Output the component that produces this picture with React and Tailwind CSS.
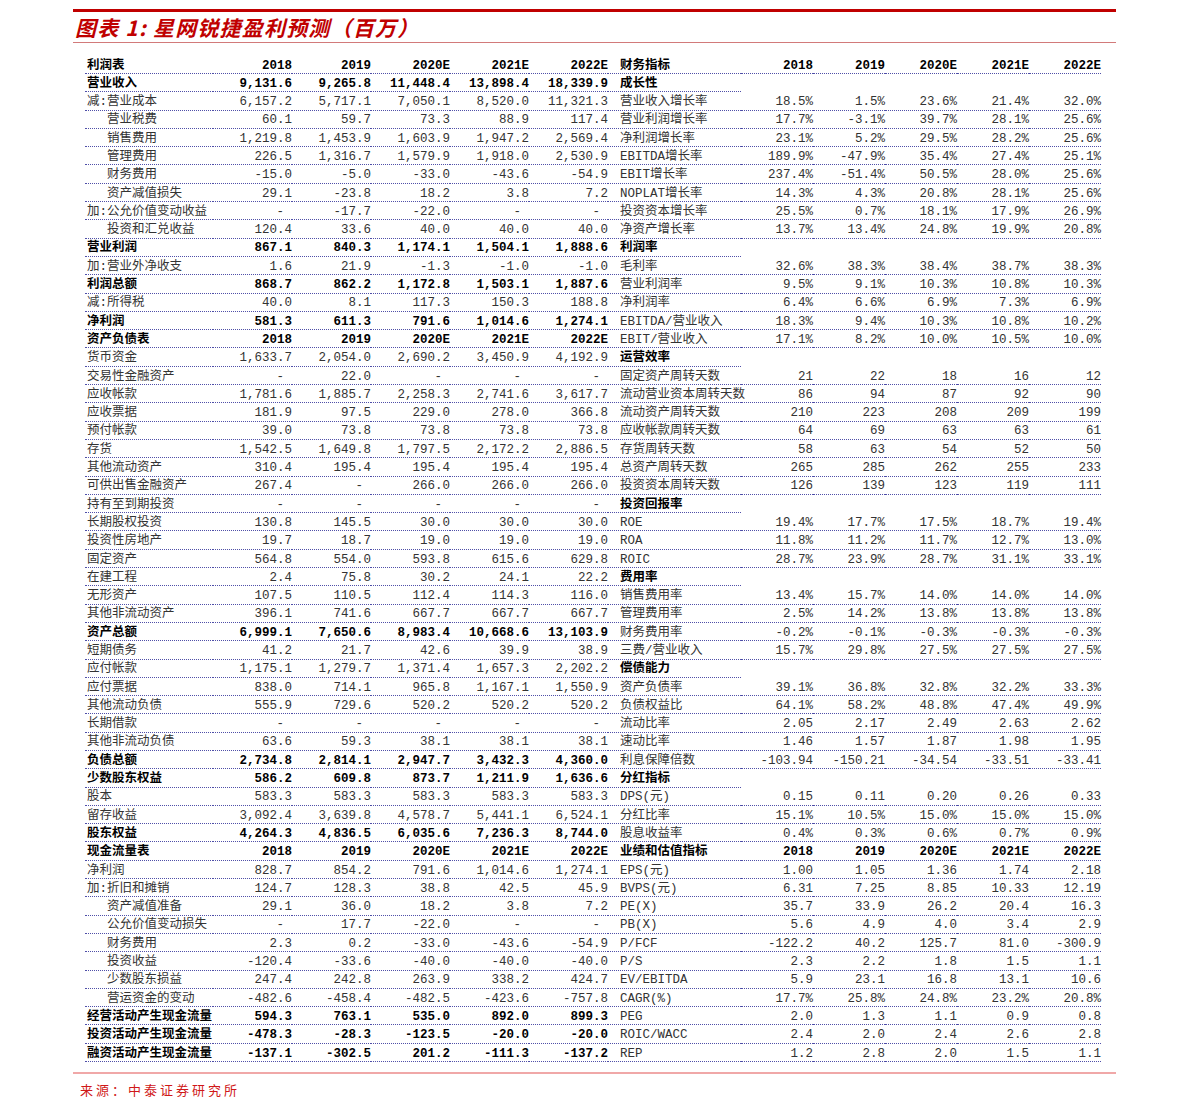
const left = [
  ['利润表', ['2018', '2019', '2020E', '2021E', '2022E'], 'h'],
  ['营业收入', ['9,131.6', '9,265.8', '11,448.4', '13,898.4', '18,339.9'], 'b'],
  ['减:营业成本', ['6,157.2', '5,717.1', '7,050.1', '8,520.0', '11,321.3'], ''],
  ['营业税费', ['60.1', '59.7', '73.3', '88.9', '117.4'], 'i'],
  ['销售费用', ['1,219.8', '1,453.9', '1,603.9', '1,947.2', '2,569.4'], 'i'],
  ['管理费用', ['226.5', '1,316.7', '1,579.9', '1,918.0', '2,530.9'], 'i'],
  ['财务费用', ['-15.0', '-5.0', '-33.0', '-43.6', '-54.9'], 'i'],
  ['资产减值损失', ['29.1', '-23.8', '18.2', '3.8', '7.2'], 'i'],
  ['加:公允价值变动收益', ['-', '-17.7', '-22.0', '-', '-'], ''],
  ['投资和汇兑收益', ['120.4', '33.6', '40.0', '40.0', '40.0'], 'i'],
  ['营业利润', ['867.1', '840.3', '1,174.1', '1,504.1', '1,888.6'], 'b'],
  ['加:营业外净收支', ['1.6', '21.9', '-1.3', '-1.0', '-1.0'], ''],
  ['利润总额', ['868.7', '862.2', '1,172.8', '1,503.1', '1,887.6'], 'b'],
  ['减:所得税', ['40.0', '8.1', '117.3', '150.3', '188.8'], ''],
  ['净利润', ['581.3', '611.3', '791.6', '1,014.6', '1,274.1'], 'b'],
  ['资产负债表', ['2018', '2019', '2020E', '2021E', '2022E'], 'h'],
  ['货币资金', ['1,633.7', '2,054.0', '2,690.2', '3,450.9', '4,192.9'], ''],
  ['交易性金融资产', ['-', '22.0', '-', '-', '-'], ''],
  ['应收帐款', ['1,781.6', '1,885.7', '2,258.3', '2,741.6', '3,617.7'], ''],
  ['应收票据', ['181.9', '97.5', '229.0', '278.0', '366.8'], ''],
  ['预付帐款', ['39.0', '73.8', '73.8', '73.8', '73.8'], ''],
  ['存货', ['1,542.5', '1,649.8', '1,797.5', '2,172.2', '2,886.5'], ''],
  ['其他流动资产', ['310.4', '195.4', '195.4', '195.4', '195.4'], ''],
  ['可供出售金融资产', ['267.4', '-', '266.0', '266.0', '266.0'], ''],
  ['持有至到期投资', ['-', '-', '-', '-', '-'], ''],
  ['长期股权投资', ['130.8', '145.5', '30.0', '30.0', '30.0'], ''],
  ['投资性房地产', ['19.7', '18.7', '19.0', '19.0', '19.0'], ''],
  ['固定资产', ['564.8', '554.0', '593.8', '615.6', '629.8'], ''],
  ['在建工程', ['2.4', '75.8', '30.2', '24.1', '22.2'], ''],
  ['无形资产', ['107.5', '110.5', '112.4', '114.3', '116.0'], ''],
  ['其他非流动资产', ['396.1', '741.6', '667.7', '667.7', '667.7'], ''],
  ['资产总额', ['6,999.1', '7,650.6', '8,983.4', '10,668.6', '13,103.9'], 'b'],
  ['短期债务', ['41.2', '21.7', '42.6', '39.9', '38.9'], ''],
  ['应付帐款', ['1,175.1', '1,279.7', '1,371.4', '1,657.3', '2,202.2'], ''],
  ['应付票据', ['838.0', '714.1', '965.8', '1,167.1', '1,550.9'], ''],
  ['其他流动负债', ['555.9', '729.6', '520.2', '520.2', '520.2'], ''],
  ['长期借款', ['-', '-', '-', '-', '-'], ''],
  ['其他非流动负债', ['63.6', '59.3', '38.1', '38.1', '38.1'], ''],
  ['负债总额', ['2,734.8', '2,814.1', '2,947.7', '3,432.3', '4,360.0'], 'b'],
  ['少数股东权益', ['586.2', '609.8', '873.7', '1,211.9', '1,636.6'], 'b'],
  ['股本', ['583.3', '583.3', '583.3', '583.3', '583.3'], ''],
  ['留存收益', ['3,092.4', '3,639.8', '4,578.7', '5,441.1', '6,524.1'], ''],
  ['股东权益', ['4,264.3', '4,836.5', '6,035.6', '7,236.3', '8,744.0'], 'b'],
  ['现金流量表', ['2018', '2019', '2020E', '2021E', '2022E'], 'h'],
  ['净利润', ['828.7', '854.2', '791.6', '1,014.6', '1,274.1'], ''],
  ['加:折旧和摊销', ['124.7', '128.3', '38.8', '42.5', '45.9'], ''],
  ['资产减值准备', ['29.1', '36.0', '18.2', '3.8', '7.2'], 'i'],
  ['公允价值变动损失', ['-', '17.7', '-22.0', '-', '-'], 'i'],
  ['财务费用', ['2.3', '0.2', '-33.0', '-43.6', '-54.9'], 'i'],
  ['投资收益', ['-120.4', '-33.6', '-40.0', '-40.0', '-40.0'], 'i'],
  ['少数股东损益', ['247.4', '242.8', '263.9', '338.2', '424.7'], 'i'],
  ['营运资金的变动', ['-482.6', '-458.4', '-482.5', '-423.6', '-757.8'], 'i'],
  ['经营活动产生现金流量', ['594.3', '763.1', '535.0', '892.0', '899.3'], 'b'],
  ['投资活动产生现金流量', ['-478.3', '-28.3', '-123.5', '-20.0', '-20.0'], 'b'],
  ['融资活动产生现金流量', ['-137.1', '-302.5', '201.2', '-111.3', '-137.2'], 'b'],
]

const right = [
  ['财务指标', ['2018', '2019', '2020E', '2021E', '2022E'], 'h'],
  ['成长性', null, 's'],
  ['营业收入增长率', ['18.5%', '1.5%', '23.6%', '21.4%', '32.0%']],
  ['营业利润增长率', ['17.7%', '-3.1%', '39.7%', '28.1%', '25.6%']],
  ['净利润增长率', ['23.1%', '5.2%', '29.5%', '28.2%', '25.6%']],
  ['EBITDA增长率', ['189.9%', '-47.9%', '35.4%', '27.4%', '25.1%']],
  ['EBIT增长率', ['237.4%', '-51.4%', '50.5%', '28.0%', '25.6%']],
  ['NOPLAT增长率', ['14.3%', '4.3%', '20.8%', '28.1%', '25.6%']],
  ['投资资本增长率', ['25.5%', '0.7%', '18.1%', '17.9%', '26.9%']],
  ['净资产增长率', ['13.7%', '13.4%', '24.8%', '19.9%', '20.8%']],
  ['利润率', null, 's'],
  ['毛利率', ['32.6%', '38.3%', '38.4%', '38.7%', '38.3%']],
  ['营业利润率', ['9.5%', '9.1%', '10.3%', '10.8%', '10.3%']],
  ['净利润率', ['6.4%', '6.6%', '6.9%', '7.3%', '6.9%']],
  ['EBITDA/营业收入', ['18.3%', '9.4%', '10.3%', '10.8%', '10.2%']],
  ['EBIT/营业收入', ['17.1%', '8.2%', '10.0%', '10.5%', '10.0%']],
  ['运营效率', null, 's'],
  ['固定资产周转天数', ['21', '22', '18', '16', '12']],
  ['流动营业资本周转天数', ['86', '94', '87', '92', '90']],
  ['流动资产周转天数', ['210', '223', '208', '209', '199']],
  ['应收帐款周转天数', ['64', '69', '63', '63', '61']],
  ['存货周转天数', ['58', '63', '54', '52', '50']],
  ['总资产周转天数', ['265', '285', '262', '255', '233']],
  ['投资资本周转天数', ['126', '139', '123', '119', '111']],
  ['投资回报率', null, 's'],
  ['ROE', ['19.4%', '17.7%', '17.5%', '18.7%', '19.4%']],
  ['ROA', ['11.8%', '11.2%', '11.7%', '12.7%', '13.0%']],
  ['ROIC', ['28.7%', '23.9%', '28.7%', '31.1%', '33.1%']],
  ['费用率', null, 's'],
  ['销售费用率', ['13.4%', '15.7%', '14.0%', '14.0%', '14.0%']],
  ['管理费用率', ['2.5%', '14.2%', '13.8%', '13.8%', '13.8%']],
  ['财务费用率', ['-0.2%', '-0.1%', '-0.3%', '-0.3%', '-0.3%']],
  ['三费/营业收入', ['15.7%', '29.8%', '27.5%', '27.5%', '27.5%']],
  ['偿债能力', null, 's'],
  ['资产负债率', ['39.1%', '36.8%', '32.8%', '32.2%', '33.3%']],
  ['负债权益比', ['64.1%', '58.2%', '48.8%', '47.4%', '49.9%']],
  ['流动比率', ['2.05', '2.17', '2.49', '2.63', '2.62']],
  ['速动比率', ['1.46', '1.57', '1.87', '1.98', '1.95']],
  ['利息保障倍数', ['-103.94', '-150.21', '-34.54', '-33.51', '-33.41']],
  ['分红指标', null, 's'],
  ['DPS(元)', ['0.15', '0.11', '0.20', '0.26', '0.33']],
  ['分红比率', ['15.1%', '10.5%', '15.0%', '15.0%', '15.0%']],
  ['股息收益率', ['0.4%', '0.3%', '0.6%', '0.7%', '0.9%']],
  ['业绩和估值指标', ['2018', '2019', '2020E', '2021E', '2022E'], 'h'],
  ['EPS(元)', ['1.00', '1.05', '1.36', '1.74', '2.18']],
  ['BVPS(元)', ['6.31', '7.25', '8.85', '10.33', '12.19']],
  ['PE(X)', ['35.7', '33.9', '26.2', '20.4', '16.3']],
  ['PB(X)', ['5.6', '4.9', '4.0', '3.4', '2.9']],
  ['P/FCF', ['-122.2', '40.2', '125.7', '81.0', '-300.9']],
  ['P/S', ['2.3', '2.2', '1.8', '1.5', '1.1']],
  ['EV/EBITDA', ['5.9', '23.1', '16.8', '13.1', '10.6']],
  ['CAGR(%)', ['17.7%', '25.8%', '24.8%', '23.2%', '20.8%']],
  ['PEG', ['2.0', '1.3', '1.1', '0.9', '0.8']],
  ['ROIC/WACC', ['2.4', '2.0', '2.4', '2.6', '2.8']],
  ['REP', ['1.2', '2.8', '2.0', '1.5', '1.1']],
]

// every cell carries the blue dotted rule of the original sheet
const line = 'border-b border-dotted border-[#4f4fa8] pt-[4.5px] leading-[13.5px]'

function Row({ l, r }) {
  const [lLabel, lVals, lType] = l
  const [rLabel, rVals, rType] = r
  const lStrong = lType === 'b' || lType === 'h'
  const rStrong = rType === 'h' || rType === 's'

  return (
    <div className="grid grid-cols-[128px_repeat(5,79px)_133px_repeat(5,72px)] h-[18.3px]">
      <div
        className={`${line} whitespace-nowrap ${lType === 'i' ? 'pl-[22px]' : 'pl-[2px]'} ${
          lStrong ? 'font-bold text-black' : 'text-[#333]'
        }`}
      >
        {lLabel}
      </div>
      {lVals.map((v, i) => (
        <div
          key={i}
          className={`${line} text-right whitespace-nowrap ${v === '-' ? 'pr-[8px]' : ''} ${
            lStrong ? 'font-bold text-black' : 'text-[#333]'
          }`}
        >
          {v}
        </div>
      ))}
      <div
        className={`${line} pl-[12px] whitespace-nowrap ${rStrong ? 'font-bold text-black' : 'text-[#333]'}`}
      >
        {rLabel}
      </div>
      {rVals
        ? rVals.map((v, i) => (
            <div
              key={i}
              className={`${line} text-right whitespace-nowrap ${
                rType === 'h' ? 'font-bold text-black' : 'text-[#333]'
              }`}
            >
              {v}
            </div>
          ))
        : [0, 1, 2, 3, 4].map(i => <div key={i} />)}
    </div>
  )
}

export default function App() {
  return (
    <div className="bg-white min-h-[1117px] pl-[73px] pr-[75px] pt-[9px] font-['Liberation_Mono','Noto_Sans_CJK_SC',monospace]">
      <div className="h-[3px] bg-[#c00000]" />
      <div className="h-[30px] flex items-center pl-[2px] pt-[2px] text-[21px] font-bold italic text-[#c00000] font-['Noto_Sans_CJK_SC',sans-serif] tracking-[1.2px]">
        图表 1: 星网锐捷盈利预测（百万）
      </div>
      <div className="h-px bg-[#d27a7a]" />

      {/* Table */}
      <div className="mt-[12px] pl-[12px] text-[12.5px]">
        {left.map((l, i) => (
          <Row key={i} l={l} r={right[i]} />
        ))}
      </div>

      <div className="mt-[11px] h-[2px] bg-[#f0a8a8]" />
      <div className="mt-[6px] pl-[7px] text-[13px] text-[#d01818] tracking-[3px] font-['Noto_Sans_CJK_SC',serif]">
        来源：中泰证券研究所
      </div>
    </div>
  )
}
